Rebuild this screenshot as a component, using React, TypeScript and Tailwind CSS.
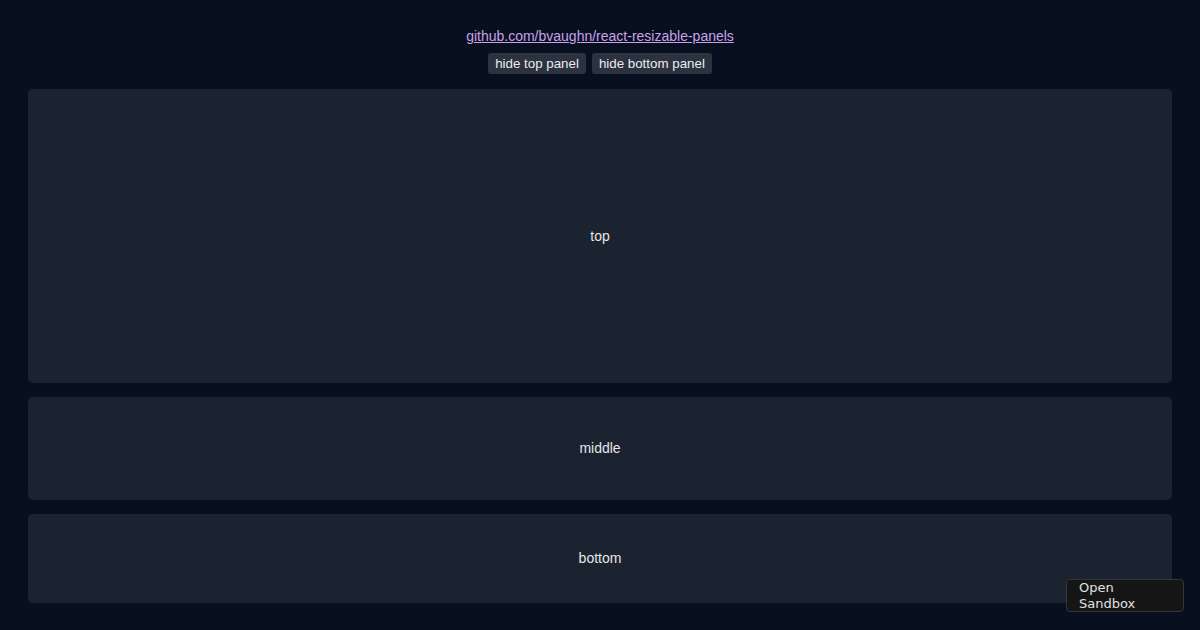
export default function App() {
  const panels = [
    { label: 'top', h: 'h-[294px]' },
    { label: 'middle', h: 'h-[103px]' },
    { label: 'bottom', h: 'h-[89px]' },
  ];

  return (
    <div
      className="relative flex h-[630px] w-full flex-col bg-[#081020] px-[28px] pt-[28px] pb-[27px] text-[#e6e6e6]"
      style={{ fontFamily: '"Liberation Sans", Arial, sans-serif' }}
    >
      <div className="flex flex-col items-center">
        <a
          href="#"
          className="text-[14px] leading-[16px] text-[#c8a2e8] underline"
        >
          github.com/bvaughn/react-resizable-panels
        </a>
        <div className="mt-[9px] flex gap-[6px]">
          <button className="h-[21px] rounded-[3px] bg-[#2b3240] px-[7px] text-[13.333px] leading-[21px] text-[#ececec]">
            hide top panel
          </button>
          <button className="h-[21px] rounded-[3px] bg-[#2b3240] px-[7px] text-[13.333px] leading-[21px] text-[#ececec]">
            hide bottom panel
          </button>
        </div>
      </div>

      <div className="mt-[15px] flex flex-col gap-[14px]">
        {panels.map((p) => (
          <div
            key={p.label}
            className={`${p.h} flex items-center justify-center rounded-[5px] bg-[#1b2331] text-[14px]`}
          >
            {p.label}
          </div>
        ))}
      </div>

      <button
        className="absolute right-[16px] bottom-[18px] h-[33px] w-[118px] rounded-[4px] border border-[#34363b] bg-[#151516] pl-[12px] text-left text-[13px] leading-[16px] text-[#e0e0e0]"
        style={{ fontFamily: '"DejaVu Sans", sans-serif' }}
      >
        Open
        <br />
        Sandbox
      </button>
    </div>
  );
}
